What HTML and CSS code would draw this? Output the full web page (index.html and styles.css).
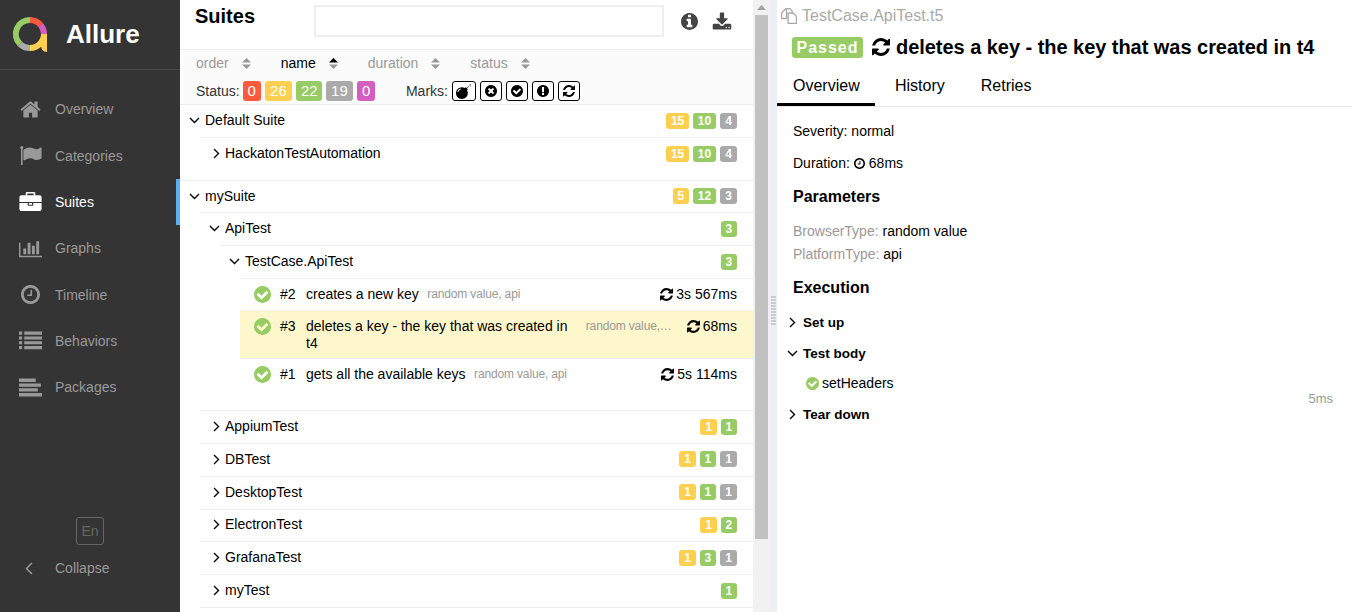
FILE: index.html
```html
<!DOCTYPE html>
<html lang="en">
<head>
<meta charset="utf-8">
<title>Allure Report</title>
<link rel="stylesheet" href="styles.css">
</head>
<body>
<svg class="defs" width="0" height="0" aria-hidden="true">
  <symbol id="i-sync" viewBox="128 128 1536 1536"><path d="M1639 1056q0 5-1 7-64 268-268 434.5t-478 166.5q-146 0-282.5-55t-243.5-157l-129 129q-19 19-45 19t-45-19-19-45v-448q0-26 19-45t45-19h448q26 0 45 19t19 45-19 45l-137 137q71 66 161 102t187 36q134 0 250-65t186-179q11-17 53-117 8-23 30-23h192q13 0 22.5 9.5t9.5 22.5zm25-800v448q0 26-19 45t-45 19h-448q-26 0-45-19t-19-45 19-45l138-138q-148-137-349-137-134 0-250 65t-186 179q-11 17-53 117-8 23-30 23h-199q-13 0-22.5-9.5t-9.5-22.5v-7q65-268 270-434.5t480-166.5q146 0 284 55.5t245 156.5l130-129q19-19 45-19t45 19 19 45z"/></symbol>
  <symbol id="i-check" viewBox="128 128 1536 1536"><path d="M1412 734q0-28-18-46l-91-90q-19-19-45-19t-45 19l-408 407-226-226q-19-19-45-19t-45 19l-91 90q-18 18-18 46 0 27 18 45l362 362q19 19 45 19 27 0 46-19l543-543q18-18 18-45zm252 162q0 209-103 385.5t-279.5 279.5-385.5 103-385.5-103-279.5-279.5-103-385.5 103-385.5 279.5-279.5 385.5-103 385.5 103 279.5 279.5 103 385.5z"/></symbol>
  <symbol id="i-times" viewBox="128 128 1536 1536"><path d="M1277 1122q0-26-19-45l-181-181 181-181q19-19 19-45 0-27-19-46l-90-90q-19-19-46-19-26 0-45 19l-181 181-181-181q-19-19-45-19-27 0-46 19l-90 90q-19 19-19 46 0 26 19 45l181 181-181 181q-19 19-19 45 0 27 19 46l90 90q19 19 46 19 26 0 45-19l181-181 181 181q19 19 45 19 27 0 46-19l90-90q19-19 19-46zm387-226q0 209-103 385.5t-279.5 279.5-385.5 103-385.5-103-279.5-279.5-103-385.5 103-385.5 279.5-279.5 385.5-103 385.5 103 279.5 279.5 103 385.5z"/></symbol>
  <symbol id="i-excl" viewBox="128 128 1536 1536"><path d="M896 128q209 0 385.5 103t279.5 279.5 103 385.5-103 385.5-279.5 279.5-385.5 103-385.5-103-279.5-279.5-103-385.5 103-385.5 279.5-279.5 385.5-103zm128 1247v-190q0-14-9-23.5t-22-9.5h-192q-13 0-23 10t-10 23v190q0 13 10 23t23 10h192q13 0 22-9.5t9-23.5zm-2-344l18-621q0-12-10-18-10-8-24-8h-220q-14 0-24 8-10 6-10 18l17 621q0 10 10 17.5t24 7.5h185q14 0 23.5-7.5t10.5-17.5z"/></symbol>
  <symbol id="i-info" viewBox="128 128 1536 1536"><path d="M1152 1376v-160q0-14-9-23t-23-9h-96v-512q0-14-9-23t-23-9h-320q-14 0-23 9t-9 23v160q0 14 9 23t23 9h96v320h-96q-14 0-23 9t-9 23v160q0 14 9 23t23 9h448q14 0 23-9t9-23zm-128-896v-160q0-14-9-23t-23-9h-192q-14 0-23 9t-9 23v160q0 14 9 23t23 9h192q14 0 23-9t9-23zm640 416q0 209-103 385.5t-279.5 279.5-385.5 103-385.5-103-279.5-279.5-103-385.5 103-385.5 279.5-279.5 385.5-103 385.5 103 279.5 279.5 103 385.5z"/></symbol>
  <symbol id="i-download" viewBox="0 128 1792 1536"><path d="M1344 1472q0-26-19-45t-45-19-45 19-19 45 19 45 45 19 45-19 19-45zm256 0q0-26-19-45t-45-19-45 19-19 45 19 45 45 19 45-19 19-45zm128-224v320q0 40-28 68t-68 28h-1472q-40 0-68-28t-28-68v-320q0-40 28-68t68-28h465l135 136q58 56 136 56t136-56l136-136h464q40 0 68 28t28 68zm-325-569q17 41-14 70l-448 448q-18 19-45 19t-45-19l-448-448q-31-29-14-70 17-39 59-39h256v-448q0-26 19-45t45-19h256q26 0 45 19t19 45v448h256q42 0 59 39z"/></symbol>
  <symbol id="i-home" viewBox="0 128 1792 1536"><path d="M1472 992v480q0 26-19 45t-45 19h-384v-384h-256v384h-384q-26 0-45-19t-19-45v-480q0-1 .5-3t.5-3l575-474 575 474q1 2 1 6zm223-69l-62 74q-8 9-21 11h-3q-13 0-21-7l-692-577-692 577q-12 8-24 7-13-2-21-11l-62-74q-8-10-7-23.5t11-21.5l719-599q32-26 76-26t76 26l244 204v-195q0-14 9-23t23-9h192q14 0 23 9t9 23v408l219 182q10 8 11 21.5t-7 23.5z"/></symbol>
  <symbol id="i-flag" viewBox="0 128 1792 1536"><path d="M320 256q0 72-64 110v1266q0 13-9.5 22.5t-22.5 9.5h-64q-13 0-22.5-9.5t-9.5-22.5v-1266q-64-38-64-110 0-53 37.5-90.5t90.5-37.5 90.5 37.5 37.5 90.5zm1472 64v763q0 25-12.5 38.5t-39.5 27.5q-215 116-369 116-61 0-123.5-22t-108.5-48-115.5-48-142.5-22q-192 0-464 146-17 9-33 9-26 0-45-19t-19-45v-742q0-32 31-55 21-14 79-43 236-120 421-120 107 0 200 29t219 88q38 19 88 19 54 0 117.5-21t110-47 88-47 54.5-21q26 0 45 19t19 45z"/></symbol>
  <symbol id="i-case" viewBox="0 0 1792 1536"><path d="M640 256h512v-128h-512v128zm1152 640v480q0 66-47 113t-113 47h-1472q-66 0-113-47t-47-113v-480h672v160q0 26 19 45t45 19h320q26 0 45-19t19-45v-160h672zm-768 0v128h-256v-128h256zm768-480v384h-1792v-384q0-66 47-113t113-47h352v-160q0-40 28-68t68-28h576q40 0 68 28t28 68v160h352q66 0 113 47t47 113z"/></symbol>
  <symbol id="i-chart" viewBox="0 128 2048 1536"><path d="M640 896v512h-256v-512h256zm384-512v1024h-256v-1024h256zm1024 1152v128h-2048v-1280h128v1152h1920zm-640-896v768h-256v-768h256zm384-384v1152h-256v-1152h256z"/></symbol>
  <symbol id="i-clock" viewBox="128 128 1536 1536"><path d="M1024 544v448q0 14-9 23t-23 9h-320q-14 0-23-9t-9-23v-64q0-14 9-23t23-9h224v-352q0-14 9-23t23-9h64q14 0 23 9t9 23zm416 352q0-148-73-273t-198-198-273-73-273 73-198 198-73 273 73 273 198 198 273 73 273-73 198-198 73-273zm224 0q0 209-103 385.5t-279.5 279.5-385.5 103-385.5-103-279.5-279.5-103-385.5 103-385.5 279.5-279.5 385.5-103 385.5 103 279.5 279.5 103 385.5z"/></symbol>
  <symbol id="i-bomb" viewBox="0 0 1792 1792"><path d="M571 589q-10-25-34-35t-49 0q-108 44-191 127t-127 191q-10 25 0 49t35 34q13 5 24 5 42 0 60-40 34-84 98.5-148.5t148.5-98.5q25-11 35-35t0-49zm942-356l46 46-244 243 68 68q19 19 19 45.5t-19 45.5l-64 64q89 161 89 343 0 143-55.5 273.5t-150 225-225 150-273.5 55.5-273.5-55.5-225-150-150-225-55.5-273.5 55.5-273.5 150-225 225-150 273.5-55.5q182 0 343 89l64-64q19-19 45.5-19t45.5 19l68 68zm239-177l-91 90q-10 10-22 10-13 0-23-10-10-9-10-22.5t10-22.5l90-91q10-9 23-9t23 9q9 10 9 23t-9 23zm40 183q0 14-9 23t-23 9h-96q-14 0-23-9t-9-23 9-23 23-9h96q14 0 23 9t9 23z"/></symbol>
  <symbol id="i-list" viewBox="0 0 22 17"><path d="M0 0h3v3H0zM5 0h17v3H5zM0 4.600h3v3H0zM5 4.600h17v3H5zM0 9.200h3v3H0zM5 9.200h17v3H5zM0 13.800h3v3H0zM5 13.800h17v3H5z"/></symbol>
  <symbol id="i-bars" viewBox="0 0 22 17"><path d="M0 0h16v3.200H0zM0 4.600h21v3.200H0zM0 9.200h18v3.200H0zM0 13.800h22v3.200H0z"/></symbol>
  <symbol id="i-sort" viewBox="0 0 9 11"><path d="M4.500 0L9 4.500H0zM0 6.500h9L4.500 11z"/></symbol>
  <symbol id="i-sort-up" viewBox="0 0 9 11"><path d="M4.500 0L9 4.500H0z"/></symbol>
  <symbol id="i-sort-down" viewBox="0 0 9 11"><path d="M0 6.500h9L4.500 11z"/></symbol>
</svg>

<div class="app">
  <aside class="side">
    <a class="brand">
      <svg class="logo" viewBox="0 0 36 36" aria-hidden="true">
        <path class="seg seg-red" d="M17 3A14 14 0 0 1 27.700 8"/>
        <path class="seg seg-pink" d="M27.700 8A14 14 0 0 1 31 17"/>
        <path class="seg seg-yellow" d="M31 17A14 14 0 0 1 17 31"/>
        <path class="seg seg-yellow" d="M31 17V28Q31 32 34 32"/>
        <path class="seg seg-gray" d="M17 31A14 14 0 0 1 7 27"/>
        <path class="seg seg-green" d="M7 27A14 14 0 0 1 17 3"/>
      </svg>
      <span class="brand-name">Allure</span>
    </a>
    <nav class="nav">
      <a class="nav-item"><svg class="nav-ic"><use href="#i-home"/></svg><span>Overview</span></a>
      <a class="nav-item"><svg class="nav-ic"><use href="#i-flag"/></svg><span>Categories</span></a>
      <a class="nav-item is-active"><svg class="nav-ic"><use href="#i-case"/></svg><span>Suites</span></a>
      <a class="nav-item"><svg class="nav-ic"><use href="#i-chart"/></svg><span>Graphs</span></a>
      <a class="nav-item"><svg class="nav-ic"><use href="#i-clock"/></svg><span>Timeline</span></a>
      <a class="nav-item"><svg class="nav-ic"><use href="#i-list"/></svg><span>Behaviors</span></a>
      <a class="nav-item"><svg class="nav-ic"><use href="#i-bars"/></svg><span>Packages</span></a>
    </nav>
    <div class="side-foot">
      <div class="lang">En</div>
      <a class="collapse">
        <svg class="collapse-ic" viewBox="0 0 8 13"><path d="M7 1L1.500 6.500L7 12"/></svg>
        <span>Collapse</span>
      </a>
    </div>
  </aside>

  <main class="list-pane">
    <header class="list-head">
      <h2 class="list-title">Suites</h2>
      <input class="search" type="text" aria-label="Search">
      <svg class="tool tool-info"><use href="#i-info"/></svg>
      <svg class="tool tool-dl"><use href="#i-download"/></svg>
    </header>
    <section class="filters">
      <div class="sorters">
        <span class="sorter">order<svg class="sort-ic"><use href="#i-sort"/></svg></span>
        <span class="sorter is-on">name<svg class="sort-ic sort-off"><use href="#i-sort-down"/></svg><svg class="sort-ic sort-over"><use href="#i-sort-up"/></svg></span>
        <span class="sorter">duration<svg class="sort-ic"><use href="#i-sort"/></svg></span>
        <span class="sorter">status<svg class="sort-ic"><use href="#i-sort"/></svg></span>
      </div>
      <div class="status-line">
        <span class="status-label">Status:</span>
        <span class="pill pill-red">0</span>
        <span class="pill pill-yellow">26</span>
        <span class="pill pill-green">22</span>
        <span class="pill pill-gray">19</span>
        <span class="pill pill-pink">0</span>
        <span class="marks-label">Marks:</span>
        <span class="mark mark-wide"><svg><use href="#i-bomb"/></svg></span>
        <span class="mark"><svg><use href="#i-times"/></svg></span>
        <span class="mark"><svg><use href="#i-check"/></svg></span>
        <span class="mark"><svg><use href="#i-excl"/></svg></span>
        <span class="mark"><svg><use href="#i-sync"/></svg></span>
      </div>
    </section>

    <div class="tree">
      <div class="node l0 open"><svg class="chev" viewBox="0 0 11 7"><path d="M1 1l4.500 4.500L10 1"/></svg><span class="node-name">Default Suite</span><span class="b b-y">15</span><span class="b b-g">10</span><span class="b b-n">4</span></div>
      <div class="node l1 no-line"><svg class="chev chev-r" viewBox="0 0 7 11"><path d="M1 1l4.500 4.500L1 10"/></svg><span class="node-name">HackatonTestAutomation</span><span class="b b-y">15</span><span class="b b-g">10</span><span class="b b-n">4</span></div>
      <div class="group-gap"></div>
      <div class="node l0 open short"><svg class="chev" viewBox="0 0 11 7"><path d="M1 1l4.500 4.500L10 1"/></svg><span class="node-name">mySuite</span><span class="b b-y">5</span><span class="b b-g">12</span><span class="b b-n">3</span></div>
      <div class="node l1 open"><svg class="chev" viewBox="0 0 11 7"><path d="M1 1l4.500 4.500L10 1"/></svg><span class="node-name">ApiTest</span><span class="b b-g">3</span></div>
      <div class="node l2 open"><svg class="chev" viewBox="0 0 11 7"><path d="M1 1l4.500 4.500L10 1"/></svg><span class="node-name">TestCase.ApiTest</span><span class="b b-g">3</span></div>

      <div class="leaf">
        <svg class="leaf-ic"><use href="#i-check"/></svg>
        <span class="leaf-num">#2</span>
        <span class="leaf-name fit">creates a new key</span>
        <span class="leaf-params">random value, api</span>
        <span class="leaf-time"><svg class="sync-ic"><use href="#i-sync"/></svg>3s 567ms</span>
      </div>
      <div class="leaf is-sel">
        <svg class="leaf-ic"><use href="#i-check"/></svg>
        <span class="leaf-num">#3</span>
        <span class="leaf-name">deletes a key - the key that was created in t4</span>
        <span class="leaf-params cut">random value, api</span>
        <span class="leaf-time"><svg class="sync-ic"><use href="#i-sync"/></svg>68ms</span>
      </div>
      <div class="leaf is-last">
        <svg class="leaf-ic"><use href="#i-check"/></svg>
        <span class="leaf-num">#1</span>
        <span class="leaf-name fit">gets all the available keys</span>
        <span class="leaf-params">random value, api</span>
        <span class="leaf-time"><svg class="sync-ic"><use href="#i-sync"/></svg>5s 114ms</span>
      </div>
      <div class="leaf-gap"></div>

      <div class="node l1 tight"><svg class="chev chev-r" viewBox="0 0 7 11"><path d="M1 1l4.500 4.500L1 10"/></svg><span class="node-name">AppiumTest</span><span class="b b-y">1</span><span class="b b-g">1</span></div>
      <div class="node l1 tight"><svg class="chev chev-r" viewBox="0 0 7 11"><path d="M1 1l4.500 4.500L1 10"/></svg><span class="node-name">DBTest</span><span class="b b-y">1</span><span class="b b-g">1</span><span class="b b-n">1</span></div>
      <div class="node l1 tight"><svg class="chev chev-r" viewBox="0 0 7 11"><path d="M1 1l4.500 4.500L1 10"/></svg><span class="node-name">DesktopTest</span><span class="b b-y">1</span><span class="b b-g">1</span><span class="b b-n">1</span></div>
      <div class="node l1 tight"><svg class="chev chev-r" viewBox="0 0 7 11"><path d="M1 1l4.500 4.500L1 10"/></svg><span class="node-name">ElectronTest</span><span class="b b-y">1</span><span class="b b-g">2</span></div>
      <div class="node l1 tight"><svg class="chev chev-r" viewBox="0 0 7 11"><path d="M1 1l4.500 4.500L1 10"/></svg><span class="node-name">GrafanaTest</span><span class="b b-y">1</span><span class="b b-g">3</span><span class="b b-n">1</span></div>
      <div class="node l1 tight"><svg class="chev chev-r" viewBox="0 0 7 11"><path d="M1 1l4.500 4.500L1 10"/></svg><span class="node-name">myTest</span><span class="b b-g">1</span></div>
    </div>
  </main>

  <div class="scrollbar">
    <svg class="sb-arrow" viewBox="0 0 9 5"><path d="M4.500 0L9 5H0z"/></svg>
    <div class="sb-thumb"></div>
  </div>

  <div class="splitter"><div class="grip"></div></div>

  <section class="detail">
    <div class="crumb">
      <svg class="copy-ic" viewBox="0.500 1 14.500 14.500"><path d="M5.500 1.500h3l2 2v2M5.500 1.500v9H1V5.500l4-4zM7 5.500h4.500l3 3v6.500H7z"/></svg>
      <span>TestCase.ApiTest.t5</span>
    </div>
    <h2 class="d-title">
      <span class="passed">Passed</span>
      <svg class="d-sync"><use href="#i-sync"/></svg>
      <span>deletes a key - the key that was created in t4</span>
    </h2>
    <div class="tabs">
      <a class="tab is-on">Overview</a>
      <a class="tab">History</a>
      <a class="tab">Retries</a>
    </div>
    <div class="d-body">
      <p class="meta">Severity: normal</p>
      <p class="meta meta-dur">Duration: <svg class="meta-clock"><use href="#i-clock"/></svg> 68ms</p>
      <h3 class="sec sec-params">Parameters</h3>
      <p class="param"><span class="param-key">BrowserType:</span> random value</p>
      <p class="param"><span class="param-key">PlatformType:</span> api</p>
      <h3 class="sec sec-exec">Execution</h3>
      <div class="stage"><svg class="chev chev-r" viewBox="0 0 7 11"><path d="M1 1l4.500 4.500L1 10"/></svg><b>Set up</b></div>
      <div class="stage"><svg class="chev" viewBox="0 0 11 7"><path d="M1 1l4.500 4.500L10 1"/></svg><b>Test body</b></div>
      <div class="step"><svg class="step-ic"><use href="#i-check"/></svg><span>setHeaders</span></div>
      <div class="step-time">5ms</div>
      <div class="stage"><svg class="chev chev-r" viewBox="0 0 7 11"><path d="M1 1l4.500 4.500L1 10"/></svg><b>Tear down</b></div>
    </div>
  </section>
</div>
</body>
</html>
```
FILE: styles.css
```css
* { box-sizing: border-box; }
html, body { height: 100%; margin: 0; overflow: hidden; }
body { font: 14px/20px "Liberation Sans", Arial, sans-serif; color: #000; background: #fff; }
.defs { position: absolute; }
svg { fill: currentColor; display: block; }
h2, h3, p { margin: 0; }

.app { display: flex; height: 612px; }

/* sidebar */
.side { width: 180px; flex: none; background: #343434; color: #999; display: flex; flex-direction: column; }
.brand { height: 70px; flex: none; border-bottom: 1px solid #4a4a4a; display: flex; align-items: center; padding-left: 13px; }
.logo { width: 36px; height: 36px; overflow: visible; }
.seg { fill: none; stroke-width: 6; }
.seg-red { stroke: #fd5a3e; }
.seg-pink { stroke: #d35ebe; }
.seg-yellow { stroke: #ffd050; }
.seg-gray { stroke: #aaa; }
.seg-green { stroke: #97cc64; }
.brand-name { margin: 0 0 2px 17px; color: #fff; font-size: 26px; font-weight: 700; line-height: 30px; }
.nav { flex: 1; padding-top: 16.200px; }
.nav-item { height: 46.300px; display: flex; align-items: center; padding-left: 19px; position: relative; }
.nav-ic { width: 23px; height: 19px; margin-right: 13px; flex: none; }
.nav-item.is-active { color: #fff; }
.nav-item.is-active::after { content: ""; position: absolute; right: 0; top: 0; bottom: 0; width: 4px; background: #5cb0f0; }
.side-foot { flex: none; padding-bottom: 34px; }
.lang { width: 28px; height: 28px; margin-left: 76px; border: 1px solid #666; border-radius: 3px; color: #666; text-align: center; line-height: 26px; }
.collapse { display: flex; align-items: center; height: 20px; margin-top: 13px; padding-left: 25px; }
.collapse-ic { width: 8px; height: 13px; margin-right: 22px; fill: none; stroke: #999; stroke-width: 1.500; }

/* list pane */
.list-pane { width: 573px; flex: none; overflow: hidden; display: flex; flex-direction: column; }
.list-head { height: 50px; flex: none; border-bottom: 1px solid #eee; display: flex; align-items: flex-start; padding-left: 15px; }
.list-title { font-size: 20px; line-height: 24px; font-weight: 700; margin-top: 4px; width: 119px; flex: none; }
.search { width: 350px; height: 32px; margin-top: 5px; border: 2px solid #eee; background: #fff; flex: none; outline: 0; }
.tool { color: #444; flex: none; }
.tool-info { width: 17px; height: 17px; margin: 13px 0 0 17px; }
.tool-dl { width: 20px; height: 18px; margin: 12px 0 0 14px; }
.filters { height: 55px; flex: none; background: #fbfbfb; border-bottom: 1px solid #eee; padding: 3px 0 0 16px; }
.sorters { display: flex; height: 20px; margin-bottom: 8px; }
.sorter { display: flex; align-items: center; color: #999; margin-right: 30px; position: relative; }
.sorter.is-on { color: #000; }
.sort-ic { width: 9px; height: 11px; margin-left: 13px; color: #999; }
.sort-over { position: absolute; right: 0; top: 5px; color: #000; }
.status-line { display: flex; align-items: center; height: 20px; }
.status-label { margin-right: 3px; color: #333; }
.marks-label { margin: 0 4px 0 31px; color: #333; }
.pill { height: 20px; min-width: 18px; padding: 0 5px; margin-right: 4px; border-radius: 3px; color: #fff; text-align: center; font-size: 15px; line-height: 20px; }
.pill-red { background: #fd5a3e; }
.pill-yellow { background: #ffd050; width: 27px; }
.pill-green { background: #97cc64; width: 26px; }
.pill-gray { background: #aaa; width: 27px; }
.pill-pink { background: #d35ebe; width: 17px; margin-right: 0; }
.mark { width: 22px; height: 20px; margin-right: 4px; border: 1px solid #000; border-radius: 3px; display: flex; align-items: center; justify-content: center; background: #fff; }
.mark svg { width: 12px; height: 12px; }
.mark-wide { width: 24px; }
.mark-wide svg { width: 15px; height: 15px; }

/* tree */
.tree { flex: 1; }
.node { height: 33px; display: flex; align-items: center; padding: 0 16px 2px 0; position: relative; background: #fff; }
.node.short { height: 32px; }
.node.tight { height: 32.800px; }
.node::after { content: ""; position: absolute; right: 0; bottom: 0; height: 1px; background: #eee; }
.node.no-line::after { display: none; }
.node.l0 { padding-left: 9px; }
.node.l0::after { left: 20px; }
.node.l1 { padding-left: 29px; }
.node.l1::after { left: 20px; }
.node.l2 { padding-left: 49px; }
.node.l2.open::after { left: 60px; }
.node.l1.open::after { left: 40px; }
.chev { width: 11px; height: 7px; flex: none; fill: none; stroke: #000; stroke-width: 1.400; margin-right: 5px; }
.chev-r { width: 7px; height: 11px; margin: 0 5px 0 4px; }
.node-name { flex: 1; margin-top: -1px; }
.b { height: 16px; min-width: 16px; margin-left: 4px; padding: 0 4.800px; border-radius: 3px; color: #fff; font-size: 12px; font-weight: 700; line-height: 16px; text-align: center; }
.b-y { background: #ffd050; }
.b-g { background: #97cc64; }
.b-n { background: #aaa; min-width: 17px; }
.group-gap { height: 10px; border-bottom: 1px solid #eee; }
.leaf { margin-left: 60px; min-height: 32px; padding: 7px 16px 6px 14px; display: flex; align-items: flex-start; border-bottom: 1px solid #eee; line-height: 17px; }
.leaf.is-last { border-bottom: 0; }
.leaf-ic { width: 17px; height: 17px; color: #97cc64; flex: none; margin-right: 9px; }
.leaf-num { width: 26px; flex: none; }
.leaf-name { flex: 1; min-width: 0; padding-right: 10px; }
.leaf-name.fit { flex: none; padding-right: 8.500px; }
.leaf-params { color: #999; font-size: 12px; letter-spacing: -0.150px; flex: none; }
.leaf-params.cut { width: 89px; overflow: hidden; white-space: nowrap; text-overflow: ellipsis; margin-right: 12px; }
.leaf-time { display: flex; align-items: center; margin-left: auto; flex: none; }
.sync-ic { width: 13px; height: 13px; margin-right: 3px; }
.is-sel { background: #fef7cb; min-height: 48px; border-bottom-color: #e8edf3; }
.leaf-gap { height: 20.200px; margin-left: 20px; border-bottom: 1px solid #eee; }

/* scrollbar and splitter */
.scrollbar { width: 17px; flex: none; background: #f1f1f1; padding: 0 2px; }
.sb-arrow { width: 9px; height: 5px; margin: 5px auto 5px; color: #a3a3a3; }
.sb-thumb { height: 524px; background: #c1c1c1; }
.splitter { width: 7px; flex: none; background: #eceff3; display: flex; align-items: center; }
.grip { width: 5px; height: 30px; margin: 10px 0 0 1px; background-image: repeating-linear-gradient(to bottom, #c9ccd0 0 2px, transparent 2px 3px); }

/* detail */
.detail { flex: 1; min-width: 0; background: #fff; display: flex; flex-direction: column; }
.crumb { height: 20px; margin-top: 6px; padding-left: 4px; display: flex; align-items: center; color: #aaa; font-size: 16px; }
.copy-ic { width: 16px; height: 16px; margin-right: 5px; fill: none; stroke: #aaa; stroke-width: 1.200; }
.d-title { display: flex; align-items: center; height: 24px; margin-top: 9px; padding-left: 15px; font-size: 20px; line-height: 24px; font-weight: 700; letter-spacing: -0.040px; }
.passed { width: 71px; height: 21px; border-radius: 3px; background: #97cc64; color: #fff; font-size: 16px; line-height: 21px; letter-spacing: 1px; text-align: center; margin-right: 9px; }
.d-sync { width: 18px; height: 18px; margin-right: 6px; }
.tabs { height: 48px; padding-top: 16px; display: flex; gap: 4px; border-bottom: 1px solid #e6e6e6; font-size: 16px; line-height: 22px; }
.tab { height: 31px; padding: 0 16px; }
.tab.is-on { width: 98px; border-bottom: 3px solid #000; }
.d-body { padding: 14px 16px 0; }
.meta { height: 20px; }
.meta-dur { display: flex; gap: 4px; align-items: center; margin-top: 12px; }
.meta-clock { width: 11px; height: 11px; }
.sec { font-size: 16px; line-height: 20px; font-weight: 700; }
.sec-params { margin-top: 14px; margin-bottom: 14px; }
.param { height: 23px; line-height: 20px; }
.param-key { color: #999; }
.sec-exec { margin-top: 11px; margin-bottom: 9px; }
.stage { height: 31px; display: flex; align-items: center; margin-left: -6px; font-size: 13.500px; }
.stage .chev { margin: 0 5px 0 0; }
.stage .chev-r { margin: 0 7px 0 2px; }
.step { height: 30px; display: flex; align-items: center; margin: -1px 0 1px 13px; }
.step-ic { width: 13px; height: 13px; color: #97cc64; margin-right: 3px; }
.step-time { height: 20px; margin: -10px 0; padding-right: 3px; text-align: right; color: #999; font-size: 13px; }
```
